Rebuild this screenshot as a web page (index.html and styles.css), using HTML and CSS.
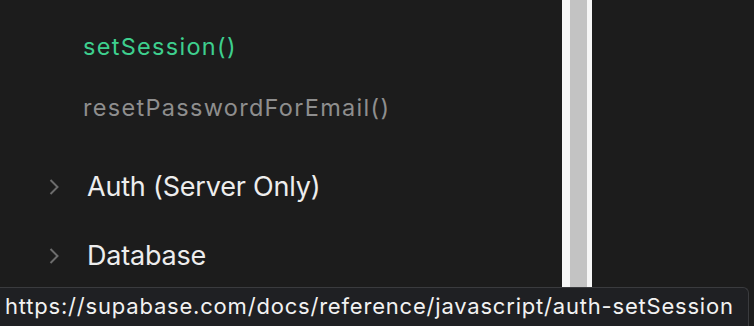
FILE: index.html
```html
<!DOCTYPE html>
<html>
<head>
<meta charset="utf-8">
<link rel="stylesheet" href="styles.css">
</head>
<body>
<div class="page">
  <nav class="sidebar">
    <ul class="sublist">
      <li class="subitem active">setSession()</li>
      <li class="subitem">resetPasswordForEmail()</li>
    </ul>
    <ul class="sections">
      <li class="section">
        <svg class="chev" width="12" height="18" viewBox="0 0 12 18"><path d="M2.5 2 L9.5 9 L2.5 16" fill="none" stroke="#6c6c6c" stroke-width="2"/></svg>
        <span>Auth (Server Only)</span>
      </li>
      <li class="section">
        <svg class="chev" width="12" height="18" viewBox="0 0 12 18"><path d="M2.5 2 L9.5 9 L2.5 16" fill="none" stroke="#6c6c6c" stroke-width="2"/></svg>
        <span>Database</span>
      </li>
    </ul>
  </nav>
  <div class="scrollbar"><div class="thumb"></div></div>
  <div class="rest"></div>
</div>
<div class="status">https://supabase.com/docs/reference/javascript/auth-setSession</div>
</body>
</html>
```
FILE: styles.css
```css
html, body {
  margin: 0;
  padding: 0;
  background: #1c1c1c;
  height: 326px;
  overflow: hidden;
}
.page {
  display: flex;
  height: 326px;
}
.sidebar {
  width: 562px;
  font-family: Inter, "Noto Sans", sans-serif;
}
ul {
  list-style: none;
  margin: 0;
  padding: 0;
}
.sublist {
  padding: 32px 0 0 83px;
  display: flex;
  flex-direction: column;
  gap: 31px;
}
.subitem {
  font-size: 23.5px;
  letter-spacing: 1.3px;
  line-height: 30px;
  color: #8e8e8e;
}
.subitem.active {
  color: #3ecf8e;
}
.sections {
  margin-top: 49px;
  padding-left: 48px;
  display: flex;
  flex-direction: column;
  gap: 39px;
}
.section {
  display: flex;
  align-items: center;
  gap: 27px;
  font-size: 27px;
  letter-spacing: -0.2px;
  line-height: 30px;
  color: #ededed;
}
.chev {
  flex: none;
}
.scrollbar {
  width: 30px;
  height: 287px;
  box-sizing: border-box;
  background: #f6f6f6;
  padding: 0 5px 0 8px;
}
.thumb {
  height: 100%;
  background: #c3c3c3;
}
.rest {
  flex: 1;
}
.status {
  position: absolute;
  left: 0;
  top: 287px;
  width: 749px;
  height: 39px;
  box-sizing: border-box;
  background: #1f2023;
  border-top: 1px solid #3a3b3e;
  border-right: 1px solid #3a3b3e;
  border-top-right-radius: 6px;
  padding-left: 5px;
  font-family: Inter, "Noto Sans", sans-serif;
  font-size: 22px;
  letter-spacing: 0.8px;
  line-height: 37px;
  color: #f2f2f2;
  white-space: nowrap;
}
```
